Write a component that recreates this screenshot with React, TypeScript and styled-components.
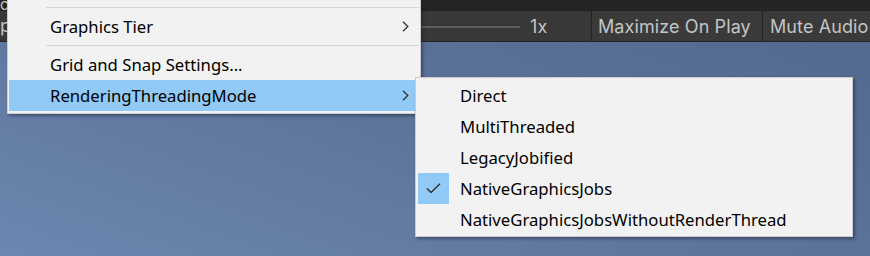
import React from "react";
import styled, { createGlobalStyle } from "styled-components";

const Global = createGlobalStyle`
  html, body { margin: 0; padding: 0; }
  body { width: 870px; height: 256px; overflow: hidden; background: #262626; }
  #root { width: 870px; height: 256px; }
`;

const Page = styled.div`
  position: relative;
  width: 870px;
  height: 256px;
  overflow: hidden;
  display: flex;
  flex-direction: column;
  font-family: "Inter", "Noto Sans", sans-serif;
`;

const TopStrip = styled.div`
  height: 10px;
  flex: none;
  background: #252525;
  border-bottom: 1px solid #1f1f1f;
  display: flex;
  align-items: center;
  color: #c4c4c4;
  font-size: 15px;
  overflow: hidden;
`;

const Toolbar = styled.div`
  height: 30px;
  flex: none;
  background: #383838;
  border-bottom: 1px solid #232323;
  display: flex;
  align-items: stretch;
  color: #c4c4c4;
  font-size: 18px;
  letter-spacing: 0.1px;
`;

const EdgeLabel = styled.div`
  width: 7px;
  overflow: hidden;
  display: flex;
  align-items: center;
  padding-bottom: 2px;
`;

const SliderArea = styled.div`
  flex: 1;
  display: flex;
  align-items: center;
  justify-content: flex-end;
`;

const Track = styled.div`
  width: 220px;
  height: 2px;
  background: #5c5c5c;
  margin-top: 2px;
`;

const ScaleLabel = styled.div`
  width: 61px;
  padding-left: 10px;
  display: flex;
  align-items: center;
  padding-top: 1px;
`;

const ToolButton = styled.div<{ $width?: number }>`
  ${(p) => (p.$width ? `width: ${p.$width}px;` : "flex: none;")}
  border-left: 1px solid #242424;
  background: #3a3a3a;
  padding-left: ${(p) => (p.$width && p.$width < 120 ? 7 : 6)}px;
  padding-top: 1px;
  display: flex;
  align-items: center;
  white-space: nowrap;
  overflow: hidden;
`;

const Scene = styled.div`
  flex: 1;
  background: linear-gradient(200deg, #536990 0%, #5d7399 45%, #6c87b0 100%);
`;

const Menu = styled.div<{ $left: number; $top: number; $width: number; $pad: string }>`
  position: absolute;
  left: ${(p) => p.$left}px;
  top: ${(p) => p.$top}px;
  width: ${(p) => p.$width}px;
  box-sizing: border-box;
  background: #f2f2f2;
  border: 1px solid #cccccc;
  padding: ${(p) => p.$pad};
  box-shadow: 2px 2px 3px rgba(20, 30, 50, 0.45);
  font-family: "Noto Sans", "Open Sans", sans-serif;
  font-size: 16.7px;
  color: #000;
`;

const Separator = styled.div`
  height: 1px;
  background: #d7d7d7;
  margin: 3px -3px 3px 37px;
`;

const Item = styled.div<{ $active?: boolean }>`
  height: 31px;
  display: flex;
  align-items: center;
  background: ${(p) => (p.$active ? "#91c9f7" : "transparent")};
  padding-left: 41px;
  padding-right: 7px;
`;

const ItemLabel = styled.span`
  flex: 1;
  white-space: nowrap;
`;

const SubItem = styled.div`
  height: 31px;
  display: flex;
  align-items: center;
`;

const CheckCell = styled.div<{ $checked?: boolean }>`
  width: 31px;
  height: 31px;
  flex: none;
  margin-right: 11px;
  display: flex;
  align-items: center;
  justify-content: center;
  background: ${(p) => (p.$checked ? "#91c9f7" : "transparent")};
`;

const Chevron = () => (
  <svg width="7" height="11" viewBox="0 0 7 11">
    <path d="M1 0.8 L5.8 5.5 L1 10.2" fill="none" stroke="#333" strokeWidth="1.3" />
  </svg>
);

const Check = () => (
  <svg width="15" height="11" viewBox="0 0 15 11">
    <path d="M1 5.5 L5 9.5 L14 0.8" fill="none" stroke="#333" strokeWidth="1.5" />
  </svg>
);

const modes = [
  "Direct",
  "MultiThreaded",
  "LegacyJobified",
  "NativeGraphicsJobs",
  "NativeGraphicsJobsWithoutRenderThread",
];

export default function App() {
  return (
    <>
      <Global />
      <Page>
        <TopStrip>
          <EdgeLabel>c</EdgeLabel>
        </TopStrip>
        <Toolbar>
          <EdgeLabel>p</EdgeLabel>
          <SliderArea>
            <Track />
          </SliderArea>
          <ScaleLabel>1x</ScaleLabel>
          <ToolButton $width={164}>Maximize On Play</ToolButton>
          <ToolButton $width={100}>Mute Audio</ToolButton>
        </Toolbar>
        <Scene />

        <Menu $left={7} $top={0} $width={414} $pad="4px 4px 2px 1px" style={{ borderTop: "none" }}>
          <Separator />
          <Item>
            <ItemLabel>Graphics Tier</ItemLabel>
            <Chevron />
          </Item>
          <Separator />
          <Item>
            <ItemLabel>Grid and Snap Settings...</ItemLabel>
          </Item>
          <Item $active>
            <ItemLabel>RenderingThreadingMode</ItemLabel>
            <Chevron />
          </Item>
        </Menu>

        <Menu $left={415} $top={77} $width={438} $pad="2px 2px 1px 2px">
          {modes.map((m, i) => (
            <SubItem key={m}>
              <CheckCell $checked={i === 3}>{i === 3 && <Check />}</CheckCell>
              <ItemLabel>{m}</ItemLabel>
            </SubItem>
          ))}
        </Menu>
      </Page>
    </>
  );
}
